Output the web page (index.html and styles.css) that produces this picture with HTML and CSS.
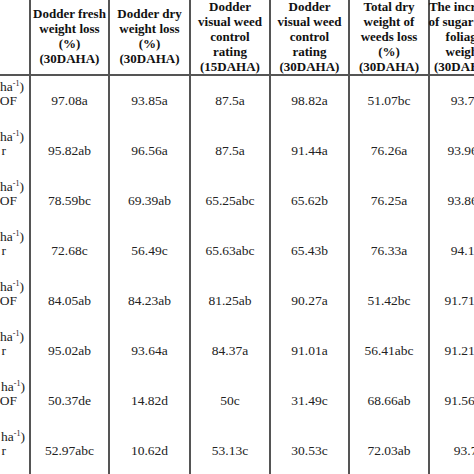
FILE: index.html
```html
<!DOCTYPE html>
<html>
<head>
<meta charset="utf-8">
<link rel="stylesheet" href="styles.css">
</head>
<body>
<div class="table">
  <div class="hd lab"></div>
  <div class="hd">Dodder fresh<br>weight loss<br>(%)<br>(30DAHA)</div>
  <div class="hd">Dodder dry<br>weight loss<br>(%)<br>(30DAHA)</div>
  <div class="hd">Dodder<br>visual weed<br>control<br>rating<br>(15DAHA)</div>
  <div class="hd">Dodder<br>visual weed<br>control<br>rating<br>(30DAHA)</div>
  <div class="hd">Total dry<br>weight of<br>weeds loss<br>(%)<br>(30DAHA)</div>
  <div class="hd last">The increase<br>of sugar beet<br>foliage<br>weight<br>(30DAHA)</div>

  <div class="lab"><div class="l1"><span>(ha<sup>-1</sup>)</span></div><div class="l2 odd"><span>+ DOF</span></div></div>
  <div class="c">97.08a</div><div class="c">93.85a</div><div class="c">87.5a</div><div class="c">98.82a</div><div class="c">51.07bc</div><div class="c">93.75a</div>

  <div class="lab"><div class="l1"><span>(ha<sup>-1</sup>)</span></div><div class="l2 even"><span>+ r</span></div></div>
  <div class="c">95.82ab</div><div class="c">96.56a</div><div class="c">87.5a</div><div class="c">91.44a</div><div class="c">76.26a</div><div class="c">93.96ab</div>

  <div class="lab"><div class="l1"><span>(ha<sup>-1</sup>)</span></div><div class="l2 odd"><span>+ DOF</span></div></div>
  <div class="c">78.59bc</div><div class="c">69.39ab</div><div class="c">65.25abc</div><div class="c">65.62b</div><div class="c">76.25a</div><div class="c">93.86ab</div>

  <div class="lab"><div class="l1"><span>(ha<sup>-1</sup>)</span></div><div class="l2 even"><span>+ r</span></div></div>
  <div class="c">72.68c</div><div class="c">56.49c</div><div class="c">65.63abc</div><div class="c">65.43b</div><div class="c">76.33a</div><div class="c">94.15a</div>

  <div class="lab"><div class="l1"><span>(ha<sup>-1</sup>)</span></div><div class="l2 odd"><span>+ DOF</span></div></div>
  <div class="c">84.05ab</div><div class="c">84.23ab</div><div class="c">81.25ab</div><div class="c">90.27a</div><div class="c">51.42bc</div><div class="c">91.71abc</div>

  <div class="lab"><div class="l1"><span>(ha<sup>-1</sup>)</span></div><div class="l2 even"><span>+ r</span></div></div>
  <div class="c">95.02ab</div><div class="c">93.64a</div><div class="c">84.37a</div><div class="c">91.01a</div><div class="c">56.41abc</div><div class="c">91.21abc</div>

  <div class="lab"><div class="l1 wide"><span>g ha<sup>-1</sup>)</span></div><div class="l2 odd"><span>+ DOF</span></div></div>
  <div class="c">50.37de</div><div class="c">14.82d</div><div class="c">50c</div><div class="c">31.49c</div><div class="c">68.66ab</div><div class="c">91.56abc</div>

  <div class="lab"><div class="l1 wide"><span>g ha<sup>-1</sup>)</span></div><div class="l2 even"><span>+ r</span></div></div>
  <div class="c">52.97abc</div><div class="c">10.62d</div><div class="c">53.13c</div><div class="c">30.53c</div><div class="c">72.03ab</div><div class="c">93.75</div>
</div>
</body>
</html>
```
FILE: styles.css
```css
html, body {
  margin: 0;
  padding: 0;
  background: #fff;
  overflow: hidden;
  width: 474px;
  height: 474px;
}
.table {
  display: grid;
  grid-template-columns: 29px 79px 81px 80px 79px 80px 80px;
  grid-template-rows: 76px repeat(8, 50px);
  font-family: "Liberation Serif", "Times New Roman", serif;
  color: #222;
  width: 508px;
}
.table > div {
  box-sizing: border-box;
  border-left: 2px solid #555;
}
.table > .lab {
  border-left: none;
}
.hd {
  border-bottom: 2px solid #555;
  font-weight: bold;
  font-size: 13px;
  line-height: 15px;
  color: #111;
  text-align: center;
  display: flex;
  align-items: center;
  justify-content: center;
  padding-bottom: 2px;
  white-space: nowrap;
}
.hd.last {
  padding-right: 10px;
}
.c {
  font-size: 13.5px;
  display: flex;
  align-items: center;
  justify-content: center;
  white-space: nowrap;
}
.lab {
  overflow: hidden;
  font-size: 13.5px;
  line-height: 14px;
  white-space: nowrap;
  display: flex;
  flex-direction: column;
  justify-content: center;
  padding-bottom: 14px;
}
.l1, .l2 {
  display: flex;
  justify-content: flex-end;
}
.l1 span, .l2 span {
  flex: none;
}
.l1 {
  padding-right: 5px;
}
.l1.wide {
  padding-right: 4px;
}
.l1 sup {
  font-size: 8px;
  vertical-align: 5px;
  line-height: 0;
}
.l2.odd {
  padding-right: 12px;
}
.l2.even {
  padding-right: 23px;
}
```
